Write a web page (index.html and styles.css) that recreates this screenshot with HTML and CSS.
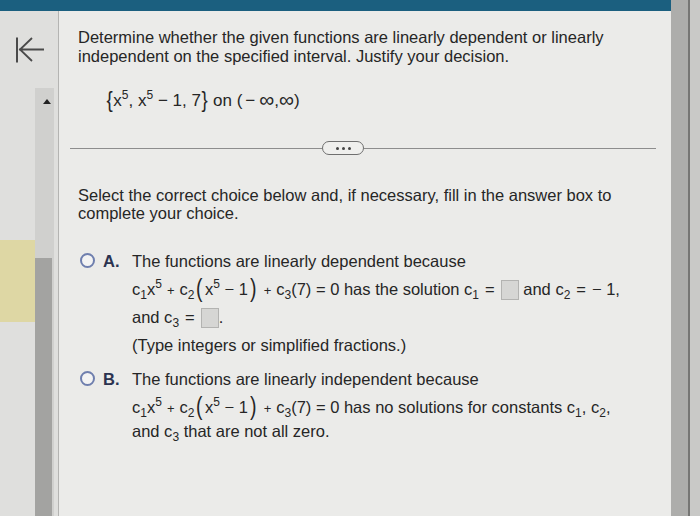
FILE: index.html
```html
<!DOCTYPE html>
<html>
<head>
<meta charset="utf-8">
<link rel="stylesheet" href="styles.css">
</head>
<body>
<div class="screen">
  <div class="app">
    <div class="topbar"></div>
    <div class="body">
      <aside class="sidebar">
        <div class="back-wrap">
          <svg class="back" width="32" height="28" viewBox="0 0 32 28">
            <path d="M3 1.5 V26.5" stroke="#4a4a4a" stroke-width="2" fill="none"/>
            <path d="M5 13.5 H30 M18 2 L6 13.5 L18 25" stroke="#4a4a4a" stroke-width="1.8" fill="none" stroke-linejoin="miter"/>
          </svg>
        </div>
        <div class="side-row">
          <div class="side-left"><div class="yellow"></div></div>
          <div class="track">
            <div class="track-up"></div>
            <div class="thumb"></div>
          </div>
        </div>
      </aside>
      <main class="main">
        <p class="prompt">Determine whether the given functions are linearly dependent or linearly<br>independent on the specified interval. Justify your decision.</p>
        <p class="set"><span class="brace">{</span>x<sup class="sp">5</sup>, x<sup class="sp">5</sup> − 1, 7<span class="brace">}</span> on (<span class="minus">−</span><span class="inf">∞</span>,<span class="inf">∞</span>)</p>
        <div class="divider">
          <span class="line-l"></span>
          <span class="pill"><i></i><i></i><i></i></span>
          <span class="line-r"></span>
        </div>
        <p class="instr">Select the correct choice below and, if necessary, fill in the answer box to<br>complete your choice.</p>

        <div class="choice choice-a">
          <span class="radio"></span>
          <span class="label">A.</span>
          <div class="content">
            <div class="ln">The functions are linearly dependent because</div>
            <div class="ln"><span class="eq">c<sub class="sb">1</sub>x<sup class="sp">5</sup><span class="op">+</span>c<sub class="sb">2</sub><span class="paren">(</span>x<sup class="sp">5</sup> − 1<span class="paren">)</span><span class="op">+</span>c<sub class="sb">3</sub>(7) = 0</span> has the solution c<sub class="sb">1</sub><span class="rel">=</span><span class="box"></span> and c<sub class="sb">2</sub><span class="rel">=</span>− 1,</div>
            <div class="ln">and c<sub class="sb">3</sub><span class="rel">=</span><span class="box"></span>.</div>
            <div class="ln">(Type integers or simplified fractions.)</div>
          </div>
        </div>

        <div class="choice choice-b">
          <span class="radio"></span>
          <span class="label">B.</span>
          <div class="content">
            <div class="ln">The functions are linearly independent because</div>
            <div class="ln"><span class="eq">c<sub class="sb">1</sub>x<sup class="sp">5</sup><span class="op">+</span>c<sub class="sb">2</sub><span class="paren">(</span>x<sup class="sp">5</sup> − 1<span class="paren">)</span><span class="op">+</span>c<sub class="sb">3</sub>(7) = 0</span> has no solutions for constants c<sub class="sb">1</sub>, c<sub class="sb">2</sub>,</div>
            <div class="ln">and c<sub class="sb">3</sub> that are not all zero.</div>
          </div>
        </div>
      </main>
    </div>
  </div>
  <div class="edge">
    <div class="edge-bar"></div>
    <div class="edge-line"></div>
    <div class="edge-rest"></div>
  </div>
</div>
</body>
</html>
```

FILE: styles.css
```css
* { box-sizing: border-box; }
html, body { margin: 0; padding: 0; }
body {
  width: 700px;
  height: 516px;
  overflow: hidden;
  background: #e6e6e4;
  font-family: "Liberation Sans", Arial, sans-serif;
  color: #262626;
}
.screen {
  display: flex;
  width: 700px;
  height: 516px;
}
.app {
  width: 671px;
  display: flex;
  flex-direction: column;
}
.topbar {
  height: 11px;
  background: #1b5f7f;
}
.body {
  flex: 1;
  display: flex;
}
.sidebar {
  width: 59px;
  background: #dfdfdd;
  border-right: 1px solid #b4b4b2;
  display: flex;
  flex-direction: column;
}
.back-wrap {
  height: 77px;
  padding: 25px 0 0 14px;
}
.back { display: block; }
.side-row {
  flex: 1;
  display: flex;
}
.side-left {
  width: 35px;
}
.yellow {
  margin-top: 152px;
  height: 82px;
  background: #ded7a4;
}
.track {
  width: 19px;
  background: #d0d0ce;
  display: flex;
  flex-direction: column;
}
.track-up {
  margin: 11px 0 0 8px;
  width: 0;
  height: 0;
  border-left: 4px solid transparent;
  border-right: 4px solid transparent;
  border-bottom: 5px solid #222;
}
.thumb {
  margin-top: 154px;
  flex: 1;
  width: 17px;
  background: #a3a3a1;
}
.main {
  flex: 1;
  background: #ebebe9;
  padding: 17px 15px 0 19px;
  font-size: 16.5px;
}
p { margin: 0; }
.prompt {
  line-height: 19px;
}
.set {
  margin: 23px 0 0 28px;
  line-height: 24px;
  height: 24px;
  font-size: 17px;
  white-space: nowrap;
}
.brace {
  font-size: 22px;
  display: inline-block;
  transform: scaleX(0.85);
  vertical-align: -1px;
  line-height: 0;
}
.minus { margin: 0 4px 0 3px; }
.inf {
  font-size: 21px;
  line-height: 0;
  vertical-align: -1px;
}
.sp {
  font-size: 12px;
  vertical-align: 7px;
  line-height: 0;
}
.sb {
  font-size: 12px;
  vertical-align: -4px;
  line-height: 0;
}
.divider {
  margin: 28px 0 0 -8px;
  display: flex;
  align-items: center;
  height: 14px;
}
.line-l {
  width: 252px;
  height: 1px;
  background: #8d8d8d;
}
.line-r {
  flex: 1;
  height: 1px;
  background: #8d8d8d;
}
.pill {
  width: 42px;
  height: 14px;
  border: 1.5px solid #6f6f6f;
  border-radius: 7px;
  display: flex;
  align-items: center;
  justify-content: center;
  gap: 3px;
  background: #efefed;
}
.pill i {
  width: 3px;
  height: 3px;
  border-radius: 50%;
  background: #444;
}
.instr {
  margin-top: 31px;
  line-height: 18px;
}
.choice {
  display: flex;
  align-items: flex-start;
}
.choice-a { margin-top: 25px; }
.choice-b { margin-top: 6px; }
.radio {
  margin: 6px 0 0 2px;
  width: 15px;
  height: 15px;
  border: 2px solid #6f7fae;
  border-radius: 50%;
  background: #f3f3f3;
  flex: none;
}
.label {
  margin-left: 8px;
  width: 29px;
  font-weight: bold;
  color: #2b3350;
  line-height: 28px;
  flex: none;
}
.content {
  flex: 1;
}
.ln {
  height: 28px;
  line-height: 28px;
  white-space: nowrap;
}
.choice-b .ln:nth-child(2) { height: 24px; }
.eq { font-size: 16.5px; }
.op {
  font-size: 13px;
  margin: 0 5px;
}
.rel { margin: 0 6px; }
.paren {
  font-size: 26px;
  display: inline-block;
  transform: scaleX(0.75);
  vertical-align: -2px;
  line-height: 0;
  margin: 0 1px;
}
.box {
  display: inline-block;
  width: 18px;
  height: 20px;
  background: #d6d6d4;
  border: 1px solid #b3b3b1;
  vertical-align: -5px;
}
.edge {
  flex: 1;
  display: flex;
}
.edge-bar {
  width: 17px;
  background: #adadab;
}
.edge-line {
  width: 2px;
  background: #767674;
}
.edge-rest {
  flex: 1;
  background: #c9c9c7;
}
```
